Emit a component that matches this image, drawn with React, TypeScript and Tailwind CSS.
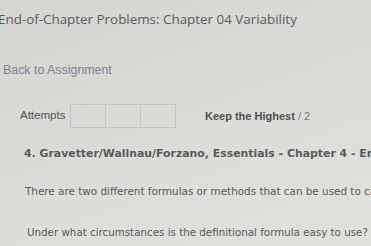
export default function App() {
  return (
    <main className="h-[246px] w-[371px] overflow-hidden bg-[linear-gradient(160deg,#d4d4d0,#dcdcd8_60%,#e0e0dc)] text-[#5a5a5a]">
      <h1 className="ml-[-2px] pt-[9px] font-['Open_Sans',sans-serif] text-[13.4px] leading-[20px] whitespace-nowrap text-[#5c5c5c]">
        End-of-Chapter Problems: Chapter 04 Variability
      </h1>

      <a className="mt-[34px] ml-[3px] block font-['Liberation_Sans',sans-serif] text-[12.4px] leading-[14px] text-[#7c8590]">
        Back to Assignment
      </a>

      <div className="mt-[27px] flex items-center">
        <span className="ml-[20px] w-[50px] font-['Liberation_Sans',sans-serif] text-[11.5px] text-[#555]">Attempts</span>
        <div className="flex h-[24px] border border-[#c4c4c0]">
          <div className="w-[35px] border-r border-[#c4c4c0]" />
          <div className="w-[35px] border-r border-[#c4c4c0]" />
          <div className="w-[34px]" />
        </div>
        <span className="ml-[29px] font-['Liberation_Sans',sans-serif] text-[11px] font-bold text-[#505050]">
          Keep the Highest <span className="font-normal text-[#777]">/ 2</span>
        </span>
      </div>

      <p className="mt-[19px] ml-[24px] font-['DejaVu_Sans',sans-serif] text-[10.9px] font-bold leading-[14px] whitespace-nowrap text-[#5a5a5a]">
        4. Gravetter/Wallnau/Forzano, Essentials - Chapter 4 - End-of-Chapter Problems
      </p>

      <p className="mt-[23px] ml-[25px] font-['DejaVu_Sans',sans-serif] text-[10.4px] leading-[14px] whitespace-nowrap text-[#5a5a5a]">
        There are two different formulas or methods that can be used to calculate SS.
      </p>

      <p className="mt-[27px] ml-[27px] font-['DejaVu_Sans',sans-serif] text-[10.3px] leading-[14px] whitespace-nowrap text-[#5a5a5a]">
        Under what circumstances is the definitional formula easy to use?
      </p>
    </main>
  );
}
